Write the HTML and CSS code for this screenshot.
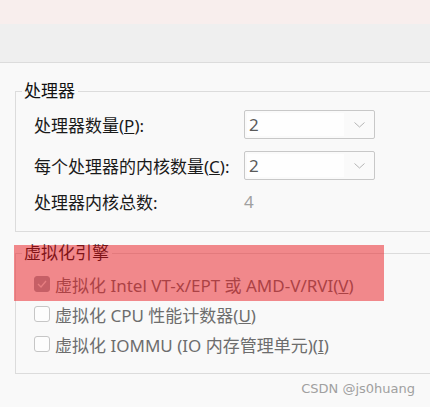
FILE: index.html
```html
<!DOCTYPE html>
<html lang="zh-CN">
<head>
<meta charset="UTF-8">
<title>处理器</title>
<link rel="stylesheet" href="styles.css">
</head>
<body>
    <div class="titlebar"></div>
    <div class="toolbar"></div>

    <div class="content">
        <fieldset class="group cpu">
            <legend>处理器</legend>
            <div class="row">
                <span class="label">处理器数量(<u>P</u>):</span>
                <div class="select"><span class="value">2</span><span class="arrow"><svg width="11" height="6" viewBox="0 0 11 6"><path d="M0.5 0.5 L5.5 5 L10.5 0.5" fill="none" stroke="#b4b4b4" stroke-width="1"/></svg></span></div>
            </div>
            <div class="row">
                <span class="label">每个处理器的内核数量(<u>C</u>):</span>
                <div class="select"><span class="value">2</span><span class="arrow"><svg width="11" height="6" viewBox="0 0 11 6"><path d="M0.5 0.5 L5.5 5 L10.5 0.5" fill="none" stroke="#b4b4b4" stroke-width="1"/></svg></span></div>
            </div>
            <div class="row last">
                <span class="label">处理器内核总数:</span>
                <span class="total">4</span>
            </div>
        </fieldset>

        <fieldset class="group virt">
            <legend>虚拟化引擎</legend>
            <div class="check">
                <span class="box checked"><svg width="10" height="8" viewBox="0 0 10 8"><path d="M1 4 L4 7 L9 1" fill="none" stroke="#e4e4e4" stroke-width="1.3"/></svg></span>
                <span>虚拟化 Intel VT-x/EPT 或 AMD-V/RVI(<u>V</u>)</span>
            </div>
            <div class="check">
                <span class="box"></span>
                <span>虚拟化 CPU 性能计数器(<u>U</u>)</span>
            </div>
            <div class="check">
                <span class="box"></span>
                <span>虚拟化 IOMMU (IO 内存管理单元)(<u>I</u>)</span>
            </div>
        </fieldset>
    </div>

    <div class="highlight"></div>
    <div class="watermark">CSDN @js0huang</div>
</body>
</html>
```

FILE: styles.css
```css
body {
    margin: 0;
    width: 430px;
    height: 407px;
    overflow: hidden;
    position: relative;
    background-color: #f9f9f9;
    font-family: "Noto Sans", "Noto Sans CJK SC", sans-serif;
    font-size: 16px;
    color: #1a1a1a;
}
.titlebar {
    height: 24px;
    background-color: #f8eeed;
}
.toolbar {
    height: 38px;
    background-color: #efefef;
    border-bottom: 1px solid #dcdcdc;
}
.content {
    padding: 18px 0 0 15px;
}
.group {
    margin: 0;
    width: 415px;
    padding: 0 0 0 18px;
    border: 1px solid #dcdcdc;
    border-right: none;
    box-sizing: border-box;
}
.group legend {
    margin-left: -12px;
    padding: 0 3px 0 2px;
    line-height: 20px;
    font-size: 17px;
    color: #111;
}
.cpu {
    padding-top: 9px;
    padding-bottom: 15px;
}
.row {
    display: grid;
    grid-template-columns: 210px 131px;
    align-items: center;
    height: 29px;
    margin-bottom: 12px;
}
.row.last {
    margin-bottom: 0;
    margin-top: -5px;
}
.label {
    font-size: 17px;
}
.select {
    display: flex;
    height: 29px;
    box-sizing: border-box;
    border: 1px solid #c8c8c8;
    border-radius: 2px;
    background-color: #fafafa;
}
.select .value {
    flex: 1;
    margin: 2px 0 2px 2px;
    padding-left: 2px;
    background-color: #fefefe;
    color: #5a5a5a;
    font-size: 17px;
    line-height: 23px;
}
.select .arrow {
    width: 30px;
    display: flex;
    align-items: center;
    justify-content: center;
}
.total {
    color: #a0a0a0;
    font-size: 17px;
}
.virt {
    margin-top: 11px;
    padding-top: 6px;
    padding-bottom: 14px;
}
.check {
    display: flex;
    align-items: center;
    height: 30px;
    gap: 5px;
    color: #6d6d6d;
    font-size: 17px;
}
.box {
    width: 16px;
    height: 16px;
    box-sizing: border-box;
    border: 1px solid #c6c6c6;
    border-radius: 3px;
    background-color: #fdfdfd;
    display: flex;
    align-items: center;
    justify-content: center;
}
.box.checked {
    background-color: #a3a7ae;
    border-color: #a3a7ae;
}
.highlight {
    position: absolute;
    left: 14px;
    top: 245px;
    width: 370px;
    height: 56px;
    background-color: rgba(233, 23, 29, 0.5);
}
.watermark {
    position: absolute;
    right: 15px;
    bottom: 11px;
    font-family: "DejaVu Sans", sans-serif;
    font-size: 13px;
    color: #a0a0a0;
}
```
